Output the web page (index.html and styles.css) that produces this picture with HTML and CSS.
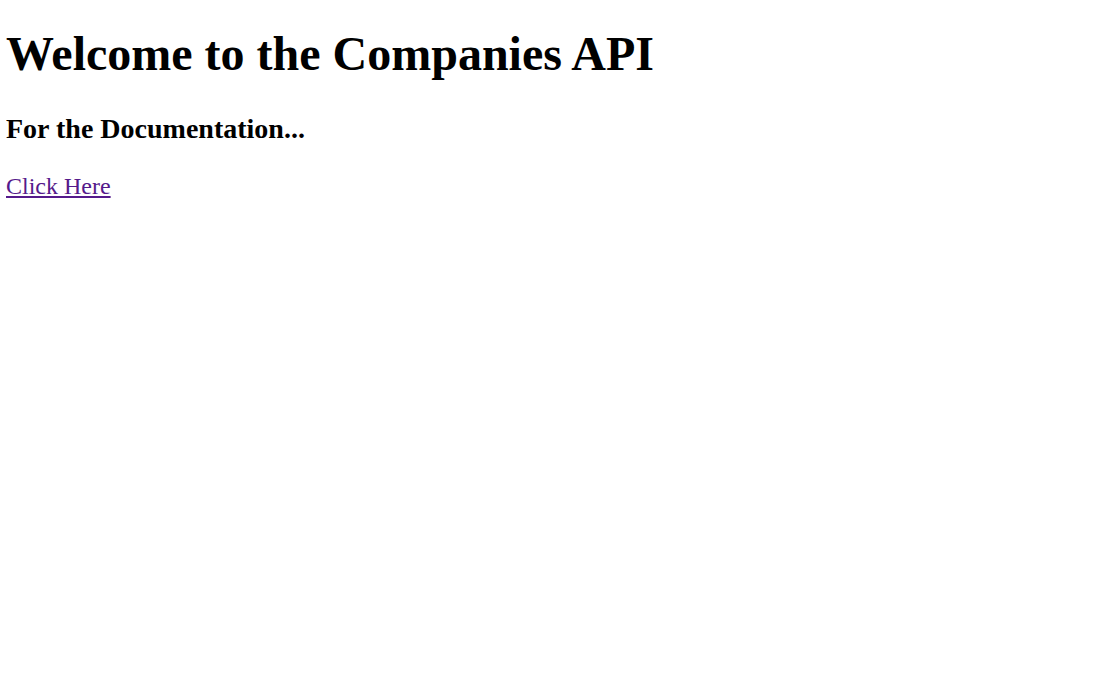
FILE: index.html
```html
<!DOCTYPE html>
<html>
<head>
<meta charset="utf-8">
<title>Companies API</title>
<link rel="stylesheet" href="styles.css">
</head>
<body>
<h1 class="title">Welcome to the Companies API</h1>
<h3 class="subtitle">For the Documentation...</h3>
<p class="link-row"><a class="doc-link" href="#">Click Here</a></p>
</body>
</html>
```
FILE: styles.css
```css
body {
  margin: 6px;
  font-family: "Liberation Serif", "Times New Roman", serif;
  font-size: 24px;
  color: #000;
  background: #fff;
}
.title {
  font-size: 48px;
  font-weight: bold;
  margin: 20px 0 32px;
}
.subtitle {
  font-size: 28px;
  font-weight: bold;
  margin: 28px 0;
}
.link-row {
  margin: 24px 0;
}
.doc-link {
  color: #551a8b;
  text-decoration: underline;
}
```
